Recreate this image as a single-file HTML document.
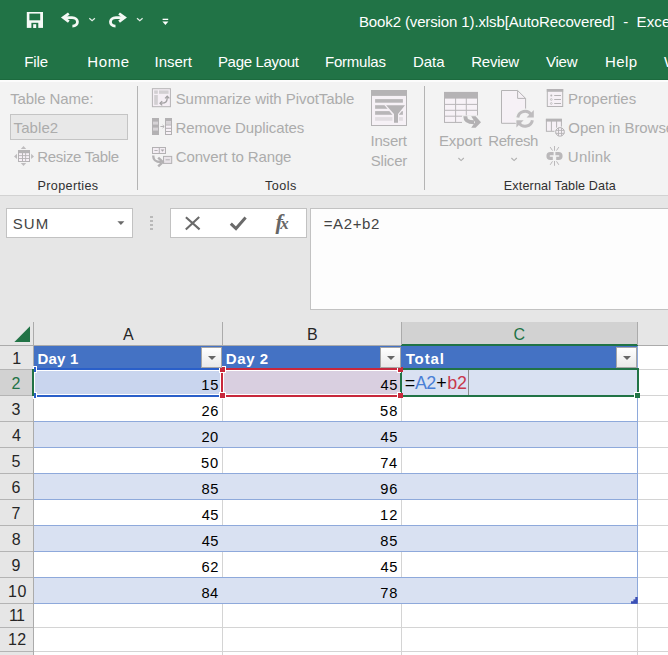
<!DOCTYPE html>
<html><head><meta charset="utf-8"><title>Excel</title>
<style>
*{box-sizing:border-box;margin:0;padding:0}
html,body{width:668px;height:655px;overflow:hidden;background:#fff}
body{font-family:"Liberation Sans",sans-serif;position:relative}
.a{position:absolute;white-space:nowrap;line-height:1}
.b{position:absolute}
.fbn{width:21px;height:21px;border:1px solid #a6a6a6;background:linear-gradient(#ffffff,#e9e9e9)}
.fbn:after{content:'';position:absolute;left:5.6px;top:8.2px;border:4.2px solid transparent;border-top:4.6px solid #666;border-bottom:0}
svg{position:absolute;overflow:visible}
</style></head><body>
<!-- backgrounds -->
<div class="b" style="left:0;top:0;width:668px;height:80px;background:#217346"></div>
<div class="b" style="left:0;top:79px;width:668px;height:1px;background:#1c6a3e"></div>
<div class="b" style="left:0;top:80px;width:668px;height:2px;background:#fcfcfc"></div>
<div class="b" style="left:0;top:81.5px;width:668px;height:114px;background:#f3f3f3"></div>
<div class="b" style="left:0;top:195px;width:668px;height:1px;background:#d2d2d2"></div>
<div class="b" style="left:0;top:196px;width:668px;height:150px;background:#e6e6e6"></div>

<!-- QAT icons -->
<svg style="left:0;top:0" width="200" height="40" viewBox="0 0 200 40">
 <!-- save -->
 <rect x="26.8" y="12" width="16.2" height="15.9" fill="#f6faf7"/>
 <rect x="29.4" y="13.6" width="10.8" height="6.7" fill="#217346"/>
 <rect x="31.4" y="22.8" width="6.9" height="5.2" fill="#217346"/>
 <rect x="33.2" y="24.2" width="3" height="3.8" fill="#f6faf7"/>
 <!-- undo -->
 <g id="undo" fill="none" stroke="#f4f8f5" stroke-width="2.8" stroke-linejoin="miter">
  <path d="M68.8 13.5 L63.3 17.6 L68.8 21.7" />
  <path d="M64 17.6 H72 C79.2 17.6 79.2 26.2 72.4 26.2"/>
 </g>
 <g fill="none" stroke="#f4f8f5" stroke-width="2.8" stroke-linejoin="miter" transform="translate(187.9,0) scale(-1,1)">
  <path d="M68.8 13.5 L63.3 17.6 L68.8 21.7" />
  <path d="M64 17.6 H72 C79.2 17.6 79.2 26.2 72.4 26.2"/>
 </g>
 <path d="M89.3 18.3 L92.1 20.8 L94.9 18.3" fill="none" stroke="#e4efe8" stroke-width="1.2"/>
 <path d="M137 18.3 L139.8 20.8 L142.6 18.3" fill="none" stroke="#e4efe8" stroke-width="1.2"/>
 <!-- customize -->
 <rect x="162.6" y="18.7" width="5.6" height="1.3" fill="#fff"/>
 <path d="M162.4 21.6 H168.4 L165.4 24.9 Z" fill="#fff"/>
</svg>
<!-- ribbon separators -->
<div class="b" style="left:137px;top:86px;width:1px;height:104px;background:#b4b4b4"></div>
<div class="b" style="left:424px;top:86px;width:1px;height:104px;background:#b4b4b4"></div>
<!-- Table name input -->
<div class="b" style="left:10px;top:114px;width:118px;height:26px;background:#e8e8e8;border:1px solid #c4c4c4"></div>
<svg style="left:0;top:82px" width="668" height="112" viewBox="0 82 668 112">
<g id="resize">
 <rect x="18" y="150" width="12" height="12" fill="#b5b3b5"/>
 <g fill="#f7f0f7"><rect x="19" y="153.2" width="3" height="2"/><rect x="23" y="153.2" width="2.2" height="2"/><rect x="26.1" y="153.2" width="2.9" height="2"/>
 <rect x="19" y="156.1" width="3" height="2"/><rect x="23" y="156.1" width="2.2" height="2"/><rect x="26.1" y="156.1" width="2.9" height="2"/>
 <rect x="19" y="159" width="3" height="2"/><rect x="23" y="159" width="2.2" height="2"/><rect x="26.1" y="159" width="2.9" height="2"/></g>
 <g fill="#bebcbe"><path d="M23.5 146 L26.2 149 H20.8 Z"/><path d="M23.5 166 L26.2 163.1 H20.8 Z"/><path d="M14 156.4 L17 153.8 V159 Z"/><path d="M34 156.4 L31.1 153.8 V159 Z"/></g>
</g>
<g id="pivot">
 <rect x="152.4" y="88.7" width="18" height="18" fill="#f5eff5" stroke="#b5b3b5" stroke-width="1"/>
 <rect x="154.2" y="90.4" width="3.6" height="3.4" fill="#d2cfd2"/>
 <rect x="159" y="90.4" width="9.6" height="3.4" fill="#d2cfd2"/>
 <rect x="154.2" y="95" width="3.6" height="9.8" fill="#d2cfd2"/>
 <path d="M160.2 103.2 H162 C165.6 103.2 167.2 101 167.2 98 V96.4" fill="none" stroke="#a3a1a3" stroke-width="1.3"/>
 <path d="M162.2 101.1 L160 103.2 L162.2 105.4 M165.1 98.4 L167.2 96.2 L169.3 98.4" fill="none" stroke="#a3a1a3" stroke-width="1.3"/>
</g>
<g id="remdup">
 <rect x="152" y="118" width="7" height="17" fill="#b3b1b3"/>
 <rect x="153" y="121.6" width="5" height="3" fill="#d6d3d6"/><rect x="153" y="127.6" width="5" height="3" fill="#d6d3d6"/>
 <path d="M160.4 126.5 H164 M162.6 125 L164.2 126.5 L162.6 128" fill="none" stroke="#b3b1b3" stroke-width="1"/>
 <rect x="165.5" y="118.5" width="6" height="16" fill="#f7f1f7" stroke="#b3b1b3" stroke-width="1"/>
 <rect x="165" y="118" width="7" height="3.4" fill="#b3b1b3"/>
 <rect x="166" y="121.6" width="5" height="3" fill="#d6d3d6"/>
 <path d="M165 125 H172 M165 128.3 H172 M165 131.5 H172" stroke="#b3b1b3" stroke-width="1"/>
</g>
<g id="convert">
 <rect x="152.5" y="147.5" width="13" height="6" fill="#f3edf3" stroke="#b3b1b3" stroke-width="1"/>
 <path d="M159.3 147.5 V153.5" stroke="#b3b1b3" stroke-width="1"/>
 <path d="M154.4 150.5 H157.6" stroke="#b3b1b3" stroke-width="1"/>
 <path d="M160.6 149.4 H164.4 L162.5 151.8 Z" fill="#a9a7a9"/>
 <rect x="163.5" y="156.4" width="8.2" height="7" fill="#e9e4e9" stroke="#b3b1b3" stroke-width="1"/>
 <path d="M165.6 159.8 H169.8" stroke="#b3b1b3" stroke-width="1"/>
 <path d="M153.2 155.6 C153.2 160.4 155.4 162 161 162" fill="none" stroke="#b3b1b3" stroke-width="2.4"/>
 <path d="M158.2 157.6 L162.8 162 L158.2 166.4" fill="none" stroke="#b3b1b3" stroke-width="2.4"/>
</g>
<g id="slicer">
 <rect x="371.5" y="90.5" width="35" height="35" fill="#f6f1f6" stroke="#b5b3b5" stroke-width="1"/>
 <rect x="371" y="90" width="36" height="5.9" fill="#b5b3b5"/>
 <rect x="375.1" y="99.1" width="27.8" height="3.6" fill="#b8b6b8"/>
 <rect x="375.1" y="105.2" width="27.8" height="3.6" fill="#b8b6b8"/>
 <rect x="375.1" y="111.1" width="27.8" height="3.7" fill="#b8b6b8"/>
 <rect x="375.1" y="117.1" width="27.8" height="3.7" fill="#e1dde1"/>
 <path d="M384 104.4 H405.8 V106.2 L399 114.4 V123.8 H392.4 V114.8 Z" fill="#f6f1f6"/>
 <path d="M386.1 105.2 H405 L398 114 V122.8 H394 V114 Z" fill="#b5b3b5"/>
</g>
<g id="export">
 <rect x="444.5" y="92.4" width="33" height="30" fill="#f7f2f7" stroke="#b5b3b5" stroke-width="1"/>
 <rect x="444" y="92" width="34" height="6.6" fill="#b5b3b5"/>
 <path d="M455.6 98 V122.5 M466.3 98 V122.5 M444 104.4 H478 M444 110.3 H478 M444 116.2 H478" stroke="#b8b6b8" stroke-width="1" fill="none"/>
 <path d="M462 115.4 H479 V124 H462 Z" fill="#f3f3f3"/>
 <path d="M465.3 116.2 C465.3 121 468 122.2 474 122.2" fill="none" stroke="#b3b1b3" stroke-width="4"/>
 <path d="M471.2 116.2 H475.6 L481 122.2 L475.6 127.8 H471.2 L475 122.2 Z" fill="#b3b1b3"/>
</g>
<g id="refresh">
 <path d="M501.5 90.5 H517.6 L525.6 98.4 V123.3 H501.5 Z" fill="#f6f1f6" stroke="#b5b3b5" stroke-width="1"/>
 <path d="M517.6 90.5 V98.4 H525.6" fill="none" stroke="#b5b3b5" stroke-width="1"/>
 <circle cx="525.1" cy="118.8" r="10.4" fill="#f3f3f3"/>
 <path d="M517.8 117.4 A7.4 7.4 0 0 1 531.2 114.6" fill="none" stroke="#bebcbe" stroke-width="3"/>
 <path d="M532.4 120.2 A7.4 7.4 0 0 1 519 123" fill="none" stroke="#bebcbe" stroke-width="3"/>
 <path d="M533.8 110 V117.4 H526.6 Z" fill="#bebcbe"/>
 <path d="M516.4 127.6 V120.2 H523.6 Z" fill="#bebcbe"/>
</g>
<g id="props">
 <rect x="547.3" y="89.5" width="15.4" height="17" fill="#f6f1f6" stroke="#b5b3b5" stroke-width="1"/>
 <rect x="546.8" y="89" width="16.4" height="2.8" fill="#b5b3b5"/>
 <path d="M554.2 95.5 H561 M554.2 99.5 H561 M554.2 103.5 H561" stroke="#b5b3b5" stroke-width="1"/>
 <circle cx="551.3" cy="95.5" r="1" fill="#b5b3b5"/><circle cx="551.3" cy="99.5" r="0.9" fill="none" stroke="#b5b3b5" stroke-width="0.7"/><circle cx="551.3" cy="103.5" r="0.9" fill="none" stroke="#b5b3b5" stroke-width="0.7"/>
</g>
<g id="browser">
 <rect x="546.4" y="119.3" width="15" height="12" fill="#f6f1f6" stroke="#b5b3b5" stroke-width="1"/>
 <rect x="545.9" y="118.8" width="16" height="2.8" fill="#b5b3b5"/>
 <path d="M551.4 121 V131 M556.6 121 V131" stroke="#b5b3b5" stroke-width="1"/>
 <circle cx="560" cy="131.9" r="5.6" fill="#f3f3f3"/>
 <circle cx="560" cy="131.9" r="4.3" fill="#f6f1f6" stroke="#b5b3b5" stroke-width="1"/>
 <path d="M555.7 130.4 H564.3 M555.7 133.4 H564.3 M558.5 127.8 V136 M561.5 127.8 V136" stroke="#b5b3b5" stroke-width="0.9"/>
</g>
<g id="unlink" fill="none" stroke="#bab8ba">
 <path d="M553.6 153.6 H550.4 A2.4 2.4 0 0 0 550.4 158.4 H552.8" stroke-width="3.2"/>
 <path d="M555.4 153.6 H558.6 A2.4 2.4 0 0 1 558.6 158.4 H556.2" stroke-width="3.2"/>
 <path d="M554.5 146 V150.8 M550.2 147.1 L552.5 150.6 M558.8 147.1 L556.5 150.6 M554.5 165.8 V161 M550.2 164.8 L552.5 161.3 M558.8 164.8 L556.5 161.3" stroke-width="1"/>
</g>
<!-- chevrons under Export/Refresh -->
<path d="M458.4 158 L461.1 160.6 L463.8 158" fill="none" stroke="#b0b0b0" stroke-width="1.1"/>
<path d="M511.4 158 L514.1 160.6 L516.8 158" fill="none" stroke="#b0b0b0" stroke-width="1.1"/>
</svg>
<div class="b" style="left:34px;top:346px;width:634px;height:309px;background:#ffffff;"></div>
<div class="b" style="left:0px;top:346px;width:33px;height:309px;background:#e6e6e6;"></div>
<div class="b" style="left:402px;top:322px;width:235px;height:22px;background:#d2d2d2;"></div>
<div class="b" style="left:401px;top:344px;width:237px;height:2px;background:#217346;"></div>
<div class="b" style="left:33px;top:322px;width:1px;height:23px;background:#ababab;"></div>
<div class="b" style="left:222px;top:322px;width:1px;height:23px;background:#ababab;"></div>
<div class="b" style="left:401px;top:322px;width:1px;height:23px;background:#ababab;"></div>
<div class="b" style="left:637px;top:322px;width:1px;height:23px;background:#ababab;"></div>
<div class="b" style="left:0px;top:345px;width:401px;height:1px;background:#ababab;"></div>
<div class="b" style="left:638px;top:345px;width:30px;height:1px;background:#ababab;"></div>
<div class="b" style="left:33px;top:346px;width:1px;height:309px;background:#ababab;"></div>
<div class="b" style="left:0px;top:369px;width:33px;height:1px;background:#b4b4b4;"></div>
<div class="b" style="left:0px;top:395px;width:33px;height:1px;background:#b4b4b4;"></div>
<div class="b" style="left:0px;top:421px;width:33px;height:1px;background:#b4b4b4;"></div>
<div class="b" style="left:0px;top:447px;width:33px;height:1px;background:#b4b4b4;"></div>
<div class="b" style="left:0px;top:473px;width:33px;height:1px;background:#b4b4b4;"></div>
<div class="b" style="left:0px;top:499px;width:33px;height:1px;background:#b4b4b4;"></div>
<div class="b" style="left:0px;top:525px;width:33px;height:1px;background:#b4b4b4;"></div>
<div class="b" style="left:0px;top:551px;width:33px;height:1px;background:#b4b4b4;"></div>
<div class="b" style="left:0px;top:577px;width:33px;height:1px;background:#b4b4b4;"></div>
<div class="b" style="left:0px;top:603px;width:33px;height:1px;background:#b4b4b4;"></div>
<div class="b" style="left:0px;top:627px;width:33px;height:1px;background:#b4b4b4;"></div>
<div class="b" style="left:0px;top:651px;width:33px;height:1px;background:#b4b4b4;"></div>
<div class="b" style="left:0px;top:370px;width:32px;height:25px;background:#d2d2d2;"></div>
<div class="b" style="left:32px;top:369px;width:2px;height:27px;background:#217346;"></div>
<div class="b" style="left:34px;top:346px;width:604px;height:23px;background:#4472c4;"></div>
<div class="b" style="left:34px;top:370px;width:603px;height:25px;background:#d9e1f2;"></div>
<div class="b" style="left:34px;top:395px;width:604px;height:1px;background:#8ea9db;"></div>
<div class="b" style="left:34px;top:421px;width:604px;height:1px;background:#8ea9db;"></div>
<div class="b" style="left:34px;top:422px;width:603px;height:25px;background:#d9e1f2;"></div>
<div class="b" style="left:34px;top:447px;width:604px;height:1px;background:#8ea9db;"></div>
<div class="b" style="left:34px;top:473px;width:604px;height:1px;background:#8ea9db;"></div>
<div class="b" style="left:34px;top:474px;width:603px;height:25px;background:#d9e1f2;"></div>
<div class="b" style="left:34px;top:499px;width:604px;height:1px;background:#8ea9db;"></div>
<div class="b" style="left:34px;top:525px;width:604px;height:1px;background:#8ea9db;"></div>
<div class="b" style="left:34px;top:526px;width:603px;height:25px;background:#d9e1f2;"></div>
<div class="b" style="left:34px;top:551px;width:604px;height:1px;background:#8ea9db;"></div>
<div class="b" style="left:34px;top:577px;width:604px;height:1px;background:#8ea9db;"></div>
<div class="b" style="left:34px;top:578px;width:603px;height:25px;background:#d9e1f2;"></div>
<div class="b" style="left:34px;top:603px;width:604px;height:1px;background:#8ea9db;"></div>
<div class="b" style="left:34px;top:369px;width:604px;height:1px;background:#8ea9db;"></div>
<div class="b" style="left:222px;top:396px;width:1px;height:25px;background:#d4d4d4;"></div>
<div class="b" style="left:401px;top:396px;width:1px;height:25px;background:#d4d4d4;"></div>
<div class="b" style="left:222px;top:448px;width:1px;height:25px;background:#d4d4d4;"></div>
<div class="b" style="left:401px;top:448px;width:1px;height:25px;background:#d4d4d4;"></div>
<div class="b" style="left:222px;top:500px;width:1px;height:25px;background:#d4d4d4;"></div>
<div class="b" style="left:401px;top:500px;width:1px;height:25px;background:#d4d4d4;"></div>
<div class="b" style="left:222px;top:552px;width:1px;height:25px;background:#d4d4d4;"></div>
<div class="b" style="left:401px;top:552px;width:1px;height:25px;background:#d4d4d4;"></div>
<div class="b" style="left:637px;top:346px;width:1px;height:258px;background:#8ea9db;"></div>
<div class="b" style="left:638px;top:369px;width:30px;height:1px;background:#d4d4d4;"></div>
<div class="b" style="left:638px;top:395px;width:30px;height:1px;background:#d4d4d4;"></div>
<div class="b" style="left:638px;top:421px;width:30px;height:1px;background:#d4d4d4;"></div>
<div class="b" style="left:638px;top:447px;width:30px;height:1px;background:#d4d4d4;"></div>
<div class="b" style="left:638px;top:473px;width:30px;height:1px;background:#d4d4d4;"></div>
<div class="b" style="left:638px;top:499px;width:30px;height:1px;background:#d4d4d4;"></div>
<div class="b" style="left:638px;top:525px;width:30px;height:1px;background:#d4d4d4;"></div>
<div class="b" style="left:638px;top:551px;width:30px;height:1px;background:#d4d4d4;"></div>
<div class="b" style="left:638px;top:577px;width:30px;height:1px;background:#d4d4d4;"></div>
<div class="b" style="left:638px;top:603px;width:30px;height:1px;background:#d4d4d4;"></div>
<div class="b" style="left:638px;top:627px;width:30px;height:1px;background:#d4d4d4;"></div>
<div class="b" style="left:638px;top:651px;width:30px;height:1px;background:#d4d4d4;"></div>
<div class="b" style="left:34px;top:627px;width:604px;height:1px;background:#d4d4d4;"></div>
<div class="b" style="left:34px;top:651px;width:604px;height:1px;background:#d4d4d4;"></div>
<div class="b" style="left:222px;top:604px;width:1px;height:51px;background:#d4d4d4;"></div>
<div class="b" style="left:401px;top:604px;width:1px;height:51px;background:#d4d4d4;"></div>
<div class="b" style="left:637px;top:604px;width:1px;height:51px;background:#d4d4d4;"></div>
<div class="b" style="left:637px;top:322px;width:1px;height:0px;background:#d4d4d4;"></div><!-- A2 reference highlight (blue) -->
<div class="b" style="left:34px;top:370px;width:187px;height:25px;background:#fff"></div>
<div class="b" style="left:35px;top:371px;width:185px;height:23px;background:#c9d5ee"></div>
<div class="b" style="left:34px;top:368px;width:185px;height:2px;background:#2a5fc9"></div>
<div class="b" style="left:34px;top:395px;width:185px;height:2px;background:#2a5fc9"></div>
<div class="b" style="left:33px;top:366px;width:4px;height:7px;background:#fff"></div>
<div class="b" style="left:33px;top:392px;width:4px;height:7px;background:#fff"></div>
<div class="b" style="left:34px;top:367px;width:2px;height:5px;background:#2a5fc9"></div>
<div class="b" style="left:34px;top:393px;width:2px;height:5px;background:#2a5fc9"></div>
<!-- B2 reference highlight (red) -->
<div class="b" style="left:220px;top:368px;width:181px;height:29px;background:#fff"></div>
<div class="b" style="left:224px;top:371px;width:177px;height:23px;background:#d9cfe0"></div>
<div class="b" style="left:221px;top:368px;width:180px;height:2px;background:#c8283c"></div>
<div class="b" style="left:221px;top:395px;width:180px;height:2px;background:#c8283c"></div>
<div class="b" style="left:221px;top:368px;width:2px;height:29px;background:#c8283c"></div>
<div class="b" style="left:219px;top:366px;width:7px;height:7px;background:#fff"></div>
<div class="b" style="left:219px;top:392px;width:7px;height:7px;background:#fff"></div>
<div class="b" style="left:220px;top:367px;width:5px;height:5px;background:#c8283c"></div>
<div class="b" style="left:220px;top:393px;width:5px;height:5px;background:#c8283c"></div>
<!-- C2 active cell (green) -->
<div class="b" style="left:400px;top:368px;width:239px;height:29px;border:2px solid #217346;background:#d9e1f2"></div>
<div class="b" style="left:634px;top:392px;width:6px;height:6px;background:#fff"></div>
<div class="b" style="left:635px;top:393px;width:5px;height:5px;background:#217346"></div>
<div class="b" style="left:397px;top:366px;width:4px;height:7px;background:#fff"></div>
<div class="b" style="left:397px;top:392px;width:4px;height:7px;background:#fff"></div>
<div class="b" style="left:398px;top:367px;width:5px;height:5px;background:#c8283c"></div>
<div class="b" style="left:398px;top:393px;width:5px;height:5px;background:#c8283c"></div>
<!-- caret -->
<div class="b" style="left:468px;top:370px;width:1px;height:25px;background:#8c8c8c"></div>
<!-- row 2 header repaint over blue -->
<div class="b" style="left:32px;top:369px;width:2px;height:27px;background:#217346"></div>
<!-- filter buttons -->
<div class="b fbn" style="left:201px;top:347px"></div>
<div class="b fbn" style="left:380px;top:347px"></div>
<div class="b fbn" style="left:616px;top:347px"></div>
<!-- table resize handle -->
<svg style="left:630px;top:596px" width="8" height="8"><path d="M6.5 1 V6.5 H1" fill="none" stroke="#3b4fb5" stroke-width="2.4"/><rect x="3.4" y="3.4" width="3.6" height="3.6" fill="#3b4fb5"/></svg>
<!-- name box -->
<div class="b" style="left:6px;top:208px;width:127px;height:30px;background:#fff;border:1px solid #c2c2c2"></div>
<svg style="left:116px;top:220px" width="10" height="6"><path d="M1.4 1.2 H8.4 L4.9 5 Z" fill="#6a6a6a"/></svg>
<!-- dots -->
<div class="b" style="left:150px;top:216px;width:3px;height:2px;background:#b9b9b9"></div>
<div class="b" style="left:150px;top:220px;width:3px;height:2px;background:#b9b9b9"></div>
<div class="b" style="left:150px;top:224px;width:3px;height:2px;background:#b9b9b9"></div>
<div class="b" style="left:150px;top:228px;width:3px;height:2px;background:#b9b9b9"></div>
<!-- buttons box -->
<div class="b" style="left:170px;top:208px;width:137px;height:30px;background:#fff;border:1px solid #c2c2c2"></div>
<svg style="left:170px;top:208px" width="137" height="30" viewBox="170 208 137 30">
 <path d="M185.9 217.3 L199.6 229.4 M199.2 217 L185.8 229.6" stroke="#6a6a6a" stroke-width="2.1" fill="none"/>
 <path d="M230.8 223.6 L236 228.6 L245.6 217.6" stroke="#6a6a6a" stroke-width="3" fill="none"/>
</svg>
<div class="a" style="left:275.4px;top:211.2px;font-family:'Liberation Serif';font-style:italic;font-weight:700;font-size:19px;color:#666;letter-spacing:-2.6px"><span style="font-size:22px">f</span><span style="font-size:17px">x</span></div>
<!-- formula box -->
<div class="b" style="left:310px;top:208px;width:360px;height:102px;background:#fdfdfd;border:1px solid #c2c2c2"></div>
<!-- select-all triangle -->
<svg style="left:12px;top:324px" width="20" height="20"><path d="M18 2.2 V18 H2.4 Z" fill="#217346"/></svg>

<div class="a" style="left:358.93px;top:13px;line-height:17px;font-size:15px;color:#ffffff;letter-spacing:-0.121px;">Book2 (version 1).xlsb[AutoRecovered]</div>
<div class="a" style="left:623.22px;top:13px;line-height:17px;font-size:15px;color:#ffffff;">-</div>
<div class="a" style="left:636.54px;top:13px;line-height:17px;font-size:15px;color:#ffffff;letter-spacing:0.113px;">Excel</div>
<div class="a" style="left:24.25px;top:53px;line-height:17px;font-size:15px;color:#ffffff;letter-spacing:-0.112px;">File</div>
<div class="a" style="left:87.25px;top:53px;line-height:17px;font-size:15px;color:#ffffff;letter-spacing:0.607px;">Home</div>
<div class="a" style="left:154.49px;top:53px;line-height:17px;font-size:15px;color:#ffffff;letter-spacing:0.007px;">Insert</div>
<div class="a" style="left:217.93px;top:53px;line-height:17px;font-size:15px;color:#ffffff;letter-spacing:-0.313px;">Page Layout</div>
<div class="a" style="left:324.93px;top:53px;line-height:17px;font-size:15px;color:#ffffff;letter-spacing:-0.207px;">Formulas</div>
<div class="a" style="left:412.93px;top:53px;line-height:17px;font-size:15px;color:#ffffff;letter-spacing:-0.019px;">Data</div>
<div class="a" style="left:471.25px;top:53px;line-height:17px;font-size:15px;color:#ffffff;letter-spacing:-0.253px;">Review</div>
<div class="a" style="left:545.88px;top:53px;line-height:17px;font-size:15px;color:#ffffff;letter-spacing:-0.189px;">View</div>
<div class="a" style="left:604.93px;top:53px;line-height:17px;font-size:15px;color:#ffffff;letter-spacing:0.422px;">Help</div>
<div class="a" style="left:663.96px;top:53px;line-height:17px;font-size:15px;color:#ffffff;">W</div>
<div class="a" style="left:10.18px;top:90px;line-height:17px;font-size:15px;color:#acacac;letter-spacing:-0.100px;">Table Name:</div>
<div class="a" style="left:13.62px;top:119px;line-height:17px;font-size:15px;color:#acacac;letter-spacing:0.078px;">Table2</div>
<div class="a" style="left:37.25px;top:148px;line-height:17px;font-size:15px;color:#acacac;letter-spacing:-0.334px;">Resize Table</div>
<div class="a" style="left:37.49px;top:179px;line-height:14px;font-size:12.6px;color:#303030;letter-spacing:0.365px;">Properties</div>
<div class="a" style="left:175.68px;top:90px;line-height:17px;font-size:15px;color:#acacac;letter-spacing:-0.054px;">Summarize with PivotTable</div>
<div class="a" style="left:175.49px;top:119px;line-height:17px;font-size:15px;color:#acacac;letter-spacing:-0.073px;">Remove Duplicates</div>
<div class="a" style="left:175.71px;top:148px;line-height:17px;font-size:15px;color:#acacac;letter-spacing:-0.121px;">Convert to Range</div>
<div class="a" style="left:265.09px;top:179px;line-height:14px;font-size:12.6px;color:#303030;letter-spacing:0.424px;">Tools</div>
<div class="a" style="left:370.49px;top:132px;line-height:17px;font-size:15px;color:#acacac;letter-spacing:-0.193px;">Insert</div>
<div class="a" style="left:370.74px;top:152px;line-height:17px;font-size:15px;color:#acacac;letter-spacing:-0.190px;">Slicer</div>
<div class="a" style="left:438.93px;top:132px;line-height:17px;font-size:15px;color:#acacac;letter-spacing:-0.084px;">Export</div>
<div class="a" style="left:488.25px;top:132px;line-height:17px;font-size:15px;color:#acacac;letter-spacing:-0.408px;">Refresh</div>
<div class="a" style="left:568.11px;top:90px;line-height:17px;font-size:15px;color:#acacac;letter-spacing:-0.036px;">Properties</div>
<div class="a" style="left:568.31px;top:119px;line-height:17px;font-size:15px;color:#acacac;letter-spacing:-0.066px;">Open in Browser</div>
<div class="a" style="left:567.84px;top:148px;line-height:17px;font-size:15px;color:#acacac;letter-spacing:0.266px;">Unlink</div>
<div class="a" style="left:503.84px;top:179px;line-height:14px;font-size:12.6px;color:#303030;letter-spacing:0.131px;">External Table Data</div>
<div class="a" style="left:12.68px;top:215px;line-height:17px;font-size:15px;color:#444444;letter-spacing:1.070px;">SUM</div>
<div class="a" style="left:323.69px;top:215px;line-height:17px;font-size:15px;color:#444444;letter-spacing:0.626px;">=A2+b2</div>
<div class="a" style="left:37.44px;top:350px;line-height:17px;font-size:15px;color:#ffffff;font-weight:700;letter-spacing:0.238px;">Day 1</div>
<div class="a" style="left:225.80px;top:350px;line-height:17px;font-size:15px;color:#ffffff;font-weight:700;letter-spacing:0.598px;">Day 2</div>
<div class="a" style="left:405.65px;top:350px;line-height:17px;font-size:15px;color:#ffffff;font-weight:700;letter-spacing:0.900px;">Total</div>
<div class="a" style="left:201.13px;top:377px;line-height:16px;font-size:14.7px;color:#000;letter-spacing:0.949px;">15</div>
<div class="a" style="left:380.61px;top:377px;line-height:16px;font-size:14.7px;color:#000;letter-spacing:0.471px;">45</div>
<div class="a" style="left:201.48px;top:403px;line-height:16px;font-size:14.7px;color:#000;letter-spacing:0.659px;">26</div>
<div class="a" style="left:380.12px;top:403px;line-height:16px;font-size:14.7px;color:#000;letter-spacing:1.043px;">58</div>
<div class="a" style="left:201.48px;top:429px;line-height:16px;font-size:14.7px;color:#000;letter-spacing:0.396px;">20</div>
<div class="a" style="left:380.61px;top:429px;line-height:16px;font-size:14.7px;color:#000;letter-spacing:0.471px;">45</div>
<div class="a" style="left:201.07px;top:455px;line-height:16px;font-size:14.7px;color:#000;letter-spacing:0.808px;">50</div>
<div class="a" style="left:380.20px;top:455px;line-height:16px;font-size:14.7px;color:#000;letter-spacing:0.690px;">74</div>
<div class="a" style="left:201.58px;top:481px;line-height:16px;font-size:14.7px;color:#000;letter-spacing:0.502px;">85</div>
<div class="a" style="left:380.25px;top:481px;line-height:16px;font-size:14.7px;color:#000;letter-spacing:0.890px;">96</div>
<div class="a" style="left:201.63px;top:507px;line-height:16px;font-size:14.7px;color:#000;letter-spacing:0.455px;">45</div>
<div class="a" style="left:379.89px;top:507px;line-height:16px;font-size:14.7px;color:#000;letter-spacing:1.318px;">12</div>
<div class="a" style="left:201.63px;top:533px;line-height:16px;font-size:14.7px;color:#000;letter-spacing:0.455px;">45</div>
<div class="a" style="left:380.36px;top:533px;line-height:16px;font-size:14.7px;color:#000;letter-spacing:0.722px;">85</div>
<div class="a" style="left:201.40px;top:559px;line-height:16px;font-size:14.7px;color:#000;letter-spacing:0.812px;">62</div>
<div class="a" style="left:380.61px;top:559px;line-height:16px;font-size:14.7px;color:#000;letter-spacing:0.471px;">45</div>
<div class="a" style="left:201.58px;top:585px;line-height:16px;font-size:14.7px;color:#000;letter-spacing:0.314px;">84</div>
<div class="a" style="left:380.20px;top:585px;line-height:16px;font-size:14.7px;color:#000;letter-spacing:0.957px;">78</div>
<div class="a" style="left:12.29px;top:350px;line-height:17px;font-size:16px;color:#262626;">1</div>
<div class="a" style="left:11.53px;top:375px;line-height:17px;font-size:16px;color:#217346;">2</div>
<div class="a" style="left:11.53px;top:401px;line-height:17px;font-size:16px;color:#262626;">3</div>
<div class="a" style="left:11.94px;top:427px;line-height:17px;font-size:16px;color:#262626;">4</div>
<div class="a" style="left:11.44px;top:453px;line-height:17px;font-size:16px;color:#262626;">5</div>
<div class="a" style="left:11.45px;top:479px;line-height:17px;font-size:16px;color:#262626;">6</div>
<div class="a" style="left:11.45px;top:505px;line-height:17px;font-size:16px;color:#262626;">7</div>
<div class="a" style="left:11.71px;top:531px;line-height:17px;font-size:16px;color:#262626;">8</div>
<div class="a" style="left:11.61px;top:557px;line-height:17px;font-size:16px;color:#262626;">9</div>
<div class="a" style="left:8.10px;top:583px;line-height:17px;font-size:16px;color:#262626;letter-spacing:0.482px;">10</div>
<div class="a" style="left:8.95px;top:607px;line-height:17px;font-size:16px;color:#262626;letter-spacing:-0.617px;">11</div>
<div class="a" style="left:8.10px;top:631px;line-height:17px;font-size:16px;color:#262626;letter-spacing:0.251px;">12</div>
<div class="a" style="left:122.96px;top:326px;line-height:17px;font-size:16px;color:#262626;">A</div>
<div class="a" style="left:306.89px;top:326px;line-height:17px;font-size:16px;color:#262626;">B</div>
<div class="a" style="left:513.44px;top:326px;line-height:17px;font-size:16px;color:#217346;">C</div>
<div class="a" style="left:404.82px;top:373px;line-height:20px;font-size:17.9px;color:#000;">=</div>
<div class="a" style="left:415.11px;top:373px;line-height:20px;font-size:17.9px;color:#4a7fd6;">A</div>
<div class="a" style="left:426.26px;top:373px;line-height:20px;font-size:17.9px;color:#4a7fd6;">2</div>
<div class="a" style="left:436.13px;top:373px;line-height:20px;font-size:17.9px;color:#000;">+</div>
<div class="a" style="left:447.32px;top:373px;line-height:20px;font-size:17.9px;color:#c8384c;">b</div>
<div class="a" style="left:457.09px;top:373px;line-height:20px;font-size:17.9px;color:#c8384c;">2</div>
</body></html>
